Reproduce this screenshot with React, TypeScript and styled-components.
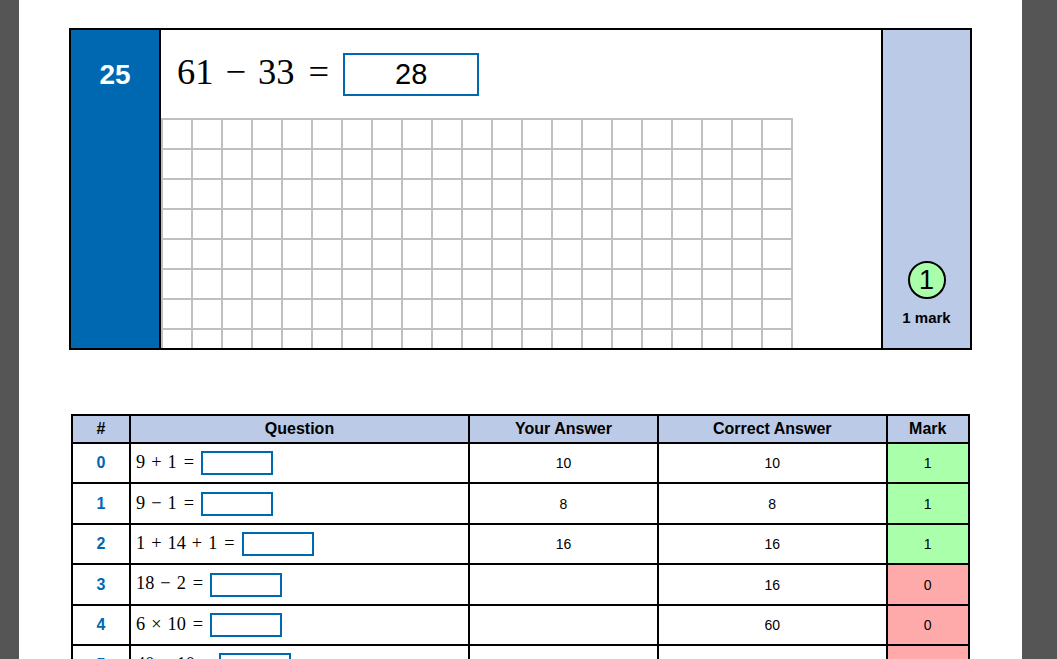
import React from 'react';
import styled, { createGlobalStyle } from 'styled-components';

const BLUE = '#0067b1';
const PALE = '#bbcae6';

const GlobalStyle = createGlobalStyle`
  html, body { margin: 0; padding: 0; background: #555555; overflow: hidden; }
  body { font-family: "Liberation Sans", Arial, sans-serif; color: #000; }
`;

const Sheet = styled.div`
  margin-left: 19px;
  width: 1003px;
  height: 100vh;
  background: #ffffff;
  padding-top: 28px;
  box-sizing: border-box;
  overflow: hidden;
`;

const Card = styled.section`
  margin-left: 50px;
  width: 903px;
  height: 322px;
  box-sizing: border-box;
  border: 2px solid #000;
  display: grid;
  grid-template-columns: 90px 1fr 89px;
`;

const NumberCell = styled.div`
  background: ${BLUE};
  border-right: 2px solid #000;
  color: #fff;
  font-weight: bold;
  font-size: 28px;
  line-height: 32px;
  text-align: center;
  padding-top: 29px;
`;

const WorkArea = styled.div`
  display: flex;
  flex-direction: column;
  overflow: hidden;
  min-height: 0;
`;

const EquationRow = styled.div`
  display: flex;
  align-items: center;
  padding: 23px 0 0 16px;
  height: 43px;
`;

const MathText = styled.span<{ $size: number; $lift?: number }>`
  font-family: "Liberation Serif", "Times New Roman", serif;
  font-size: ${p => p.$size}px;
  line-height: 1;
  white-space: nowrap;
  display: inline-flex;
  align-items: baseline;
  margin-bottom: ${p => p.$lift ?? 0}px;
`;

const Bin = styled.span`
  display: inline-block;
  width: 0.778em;
  margin: 0 0.222em;
  text-align: center;
`;

const Rel = styled.span`
  display: inline-block;
  width: 0.778em;
  margin: 0 0.278em;
  text-align: center;
`;

const AnswerBox = styled.div`
  width: 136px;
  height: 43px;
  box-sizing: border-box;
  border: 2px solid ${BLUE};
  display: flex;
  align-items: center;
  justify-content: center;
  font-size: 29px;
`;

const Grid = styled.div`
  margin-top: 22px;
  width: 632px;
  flex: 1;
  background-image:
    linear-gradient(to right, #c0c0c0 2px, transparent 2px),
    linear-gradient(to bottom, #c0c0c0 2px, transparent 2px);
  background-size: 30px 30px;
`;

const MarkPanel = styled.div`
  background: ${PALE};
  border-left: 2px solid #000;
  display: flex;
  flex-direction: column;
  justify-content: flex-end;
  align-items: center;
  padding-bottom: 21px;
`;

const MarkCircle = styled.div`
  width: 38px;
  height: 38px;
  box-sizing: border-box;
  border: 2px solid #000;
  border-radius: 50%;
  background: #aaffaa;
  display: flex;
  align-items: center;
  justify-content: center;
  font-size: 27px;
  line-height: 1;
`;

const MarkLabel = styled.div`
  margin-top: 10px;
  font-weight: bold;
  font-size: 15px;
  line-height: 18px;
`;

const Results = styled.table`
  margin: 64px 0 0 52px;
  width: 897px;
  border-collapse: collapse;
  table-layout: fixed;
`;

const Head = styled.th`
  background: ${PALE};
  border: 2px solid #000;
  font-weight: bold;
  font-size: 16px;
  height: 26px;
  padding: 0;
  text-align: center;
`;

const Cell = styled.td<{ $tone?: 'good' | 'bad' }>`
  border: 2px solid #000;
  height: 38.45px;
  padding: 0;
  text-align: center;
  font-size: 14px;
  background: ${p => (p.$tone === 'good' ? '#aaffaa' : p.$tone === 'bad' ? '#ffaaaa' : '#fff')};
`;

const IndexCell = styled(Cell)`
  color: ${BLUE};
  font-weight: bold;
  font-size: 16px;
`;

const QuestionCell = styled(Cell)`
  text-align: left;
  padding-left: 5px;
`;

const QuestionLine = styled.div`
  display: flex;
  align-items: center;
`;

const Blank = styled.span`
  display: inline-block;
  width: 72px;
  height: 24px;
  box-sizing: border-box;
  border: 2px solid ${BLUE};
`;

function Expr({ text, size, lift }: { text: string; size: number; lift?: number }) {
  const parts = text.split(' ');
  return (
    <MathText $size={size} $lift={lift}>
      {parts.map((t, i) =>
        t === '=' ? <Rel key={i}>=</Rel> : /^\d+$/.test(t) ? <span key={i}>{t}</span> : <Bin key={i}>{t}</Bin>
      )}
    </MathText>
  );
}

const rows = [
  { q: '9 + 1 =', yours: '10', correct: '10', mark: 1 },
  { q: '9 − 1 =', yours: '8', correct: '8', mark: 1 },
  { q: '1 + 14 + 1 =', yours: '16', correct: '16', mark: 1 },
  { q: '18 − 2 =', yours: '', correct: '16', mark: 0 },
  { q: '6 × 10 =', yours: '', correct: '60', mark: 0 },
  { q: '40 − 10 =', yours: '', correct: '30', mark: 0 },
  { q: '7 + 5 =', yours: '', correct: '12', mark: 0 },
];

export default function App() {
  return (
    <>
      <GlobalStyle />
      <Sheet>
        <Card>
          <NumberCell>25</NumberCell>
          <WorkArea>
            <EquationRow>
              <Expr text="61 − 33 =" size={36.5} lift={5} />
              <AnswerBox>28</AnswerBox>
            </EquationRow>
            <Grid />
          </WorkArea>
          <MarkPanel>
            <MarkCircle>1</MarkCircle>
            <MarkLabel>1 mark</MarkLabel>
          </MarkPanel>
        </Card>
        <Results>
          <colgroup>
            <col style={{ width: 58 }} />
            <col style={{ width: 339 }} />
            <col style={{ width: 189 }} />
            <col style={{ width: 228.5 }} />
            <col style={{ width: 82.5 }} />
          </colgroup>
          <thead>
            <tr>
              <Head>#</Head>
              <Head>Question</Head>
              <Head>Your Answer</Head>
              <Head>Correct Answer</Head>
              <Head>Mark</Head>
            </tr>
          </thead>
          <tbody>
            {rows.map((r, i) => (
              <tr key={i}>
                <IndexCell>{i}</IndexCell>
                <QuestionCell>
                  <QuestionLine>
                    <Expr text={r.q} size={18.3} lift={2} />
                    <Blank />
                  </QuestionLine>
                </QuestionCell>
                <Cell>{r.yours}</Cell>
                <Cell>{r.correct}</Cell>
                <Cell $tone={r.mark ? 'good' : 'bad'}>{r.mark}</Cell>
              </tr>
            ))}
          </tbody>
        </Results>
      </Sheet>
    </>
  );
}
